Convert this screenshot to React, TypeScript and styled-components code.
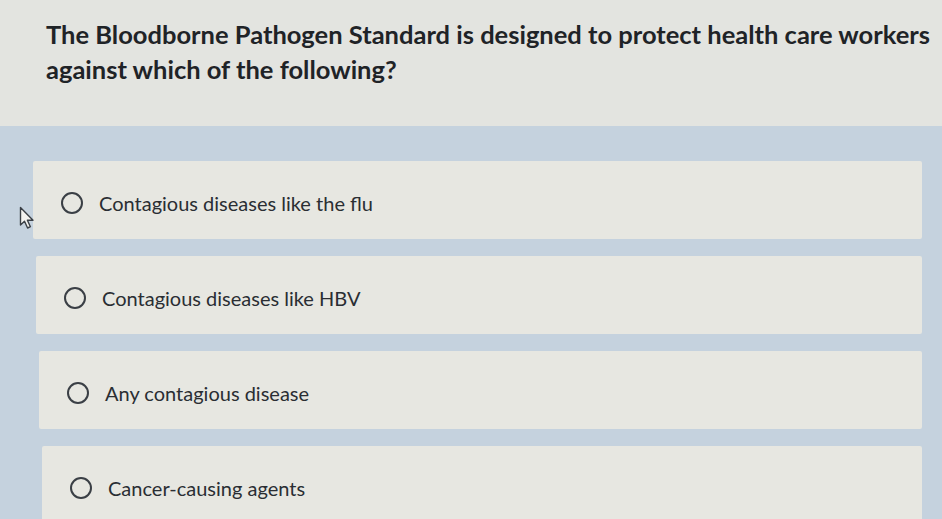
import styled, { createGlobalStyle } from "styled-components";

const options = [
  "Contagious diseases like the flu",
  "Contagious diseases like HBV",
  "Any contagious disease",
  "Cancer-causing agents",
];

export default function App() {
  return (
    <>
      <GlobalStyle />
      <Page>
        <Header>
          <Question>
            The Bloodborne Pathogen Standard is designed to protect health care
            workers against which of the following?
          </Question>
        </Header>
        <Choices>
          {options.map((text, i) => (
            <Choice key={text} $shift={i * 3}>
              <Radio />
              <ChoiceText>{text}</ChoiceText>
            </Choice>
          ))}
          <Cursor viewBox="0 0 16 24" width="16" height="24">
            <path
              d="M1.5 1.5 L1.5 19 L5.5 15.2 L8.6 22 L11.4 20.7 L8.4 14.2 L14 14.2 Z"
              fill="#f3f3f0"
              stroke="#3b4046"
              strokeWidth="1.4"
              strokeLinejoin="round"
            />
          </Cursor>
        </Choices>
      </Page>
    </>
  );
}

const GlobalStyle = createGlobalStyle`
  html, body {
    margin: 0;
    padding: 0;
    background: #e3e4e0;
  }
  body {
    font-family: Lato, "Noto Sans", sans-serif;
  }
`;

const Page = styled.div`
  width: 942px;
  height: 519px;
  overflow: hidden;
  display: flex;
  flex-direction: column;
  background: #e3e4e0;
`;

const Header = styled.header`
  height: 126px;
  box-sizing: border-box;
  padding: 17px 10px 0 46px;
  flex-shrink: 0;
`;

const Question = styled.h1`
  margin: 0;
  font-size: 25.5px;
  line-height: 35px;
  font-weight: 700;
  color: #1f2327;
`;

const Choices = styled.section`
  position: relative;
  flex: 1;
  background: #c5d2de;
  padding: 35px 20px 0 33px;
  display: flex;
  flex-direction: column;
  gap: 17px;
`;

const Choice = styled.div<{ $shift: number }>`
  height: 78px;
  flex-shrink: 0;
  margin-left: ${(p) => p.$shift}px;
  background: #e7e7e1;
  border-radius: 2px;
  display: flex;
  align-items: center;
  gap: 16px;
  padding-left: 28px;
  padding-top: 5px;
  box-sizing: border-box;
`;

const Radio = styled.span`
  width: 18px;
  height: 18px;
  border-radius: 50%;
  border: 2.5px solid #3a3f45;
  flex-shrink: 0;
`;

const ChoiceText = styled.span`
  font-size: 20px;
  color: #2a2e33;
`;

const Cursor = styled.svg`
  position: absolute;
  left: 19px;
  top: 80px;
`;
